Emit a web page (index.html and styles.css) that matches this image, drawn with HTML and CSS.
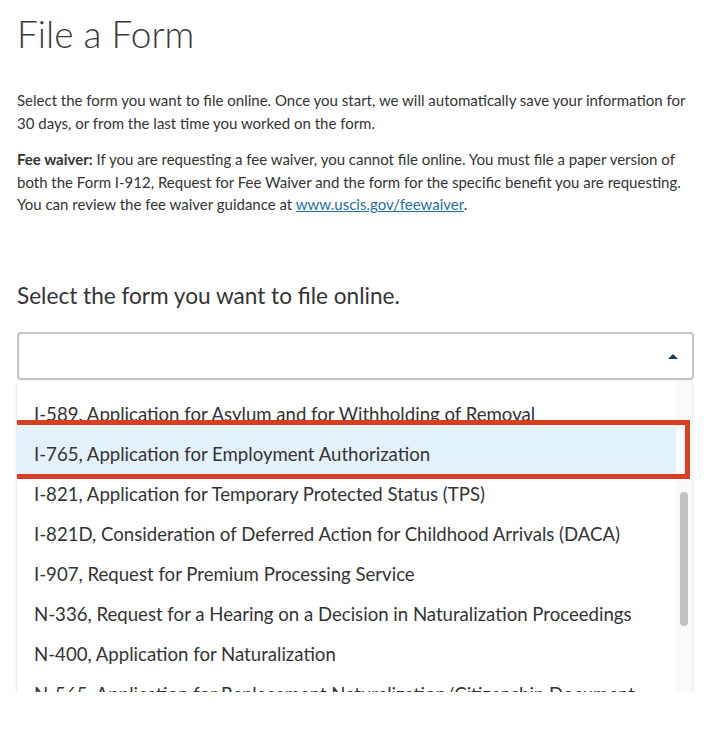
FILE: index.html
```html
<!DOCTYPE html>
<html lang="en">
<head>
<meta charset="utf-8">
<title>File a Form</title>
<link rel="stylesheet" href="styles.css">
</head>
<body>
<main class="page">
  <h1 class="title">File a Form</h1>
  <p class="text">Select the form you want to file online. Once you start, we will automatically save your information for 30 days, or from the last time you worked on the form.</p>
  <p class="text"><strong>Fee waiver:</strong> If you are requesting a fee waiver, you cannot file online. You must file a paper version of both the Form I-912, Request for Fee Waiver and the form for the specific benefit you are requesting. You can review the fee waiver guidance at <a class="link" href="#">www.uscis.gov/feewaiver</a>.</p>

  <div class="field">
    <label class="label">Select the form you want to file online.</label>
    <div class="select">
      <span class="caret"></span>
    </div>
    <div class="dropdown">
      <ul class="options">
        <li class="option"><span class="option-text">I-589, Application for Asylum and for Withholding of Removal</span></li>
        <li class="option option-active"><span class="option-text">I-765, Application for Employment Authorization</span></li>
        <li class="option"><span class="option-text">I-821, Application for Temporary Protected Status (TPS)</span></li>
        <li class="option"><span class="option-text">I-821D, Consideration of Deferred Action for Childhood Arrivals (DACA)</span></li>
        <li class="option"><span class="option-text">I-907, Request for Premium Processing Service</span></li>
        <li class="option"><span class="option-text">N-336, Request for a Hearing on a Decision in Naturalization Proceedings</span></li>
        <li class="option"><span class="option-text">N-400, Application for Naturalization</span></li>
        <li class="option"><span class="option-text">N-565, Application for Replacement Naturalization/Citizenship Document</span></li>
      </ul>
      <div class="scrollbar"><div class="thumb"></div></div>
      <div class="annotation"></div>
    </div>
  </div>
</main>
</body>
</html>
```
FILE: styles.css
```css
html, body {
  margin: 0;
  padding: 0;
  background: #ffffff;
}

body {
  font-family: Lato, "Open Sans", "Liberation Sans", sans-serif;
  color: #333333;
}

.page {
  padding: 12px 17px 0 17px;
}

.title {
  margin: 0;
  font-weight: 300;
  font-size: 37px;
  line-height: 44px;
  color: #3a3a3a;
}

.text {
  margin: 0;
  font-size: 15px;
  line-height: 22.6px;
  color: #333333;
}

.title + .text {
  margin-top: 33px;
}

.text + .text {
  margin-top: 14px;
}

.text strong {
  font-weight: 700;
}

.link {
  color: #1f6f9c;
  text-decoration: underline;
}

.field {
  margin-top: 66px;
}

.label {
  display: block;
  font-size: 22.6px;
  line-height: 28px;
  color: #333333;
}

.select {
  margin-top: 22px;
  height: 44px;
  border: 2px solid #c4c4c4;
  border-radius: 4px;
  position: relative;
  width: 673px;
}

.caret {
  position: absolute;
  right: 14px;
  top: 20px;
  width: 0;
  height: 0;
  border-left: 5px solid transparent;
  border-right: 5px solid transparent;
  border-bottom: 5px solid #1d3d5c;
}

.dropdown {
  position: relative;
  margin-top: 1px;
  width: 675px;
  height: 311px;
  display: grid;
  grid-template-columns: 1fr 16px;
  background: #ffffff;
  box-shadow: 0 1px 3px rgba(0, 0, 0, 0.18);
  overflow: hidden;
}

.options {
  list-style: none;
  margin: 0;
  padding: 13px 0 0 0;
}

.option {
  position: relative;
  height: 40px;
  line-height: 40px;
  padding-left: 17px;
  font-size: 18.6px;
  white-space: nowrap;
  color: #333333;
}

.option-text {
  position: relative;
}

.option-active::before {
  content: "";
  position: absolute;
  left: 0;
  right: 0;
  top: -7px;
  bottom: -1px;
  background: #e3f1fb;
}

.scrollbar {
  background: #fafafa;
  position: relative;
}

.thumb {
  position: absolute;
  left: 4px;
  width: 8px;
  top: 111px;
  height: 134px;
  border-radius: 4px;
  background: #c2c2c2;
}

.annotation {
  position: absolute;
  left: -7px;
  top: 39px;
  width: 670px;
  height: 49px;
  border: 5px solid #d93d22;
  pointer-events: none;
}
```
